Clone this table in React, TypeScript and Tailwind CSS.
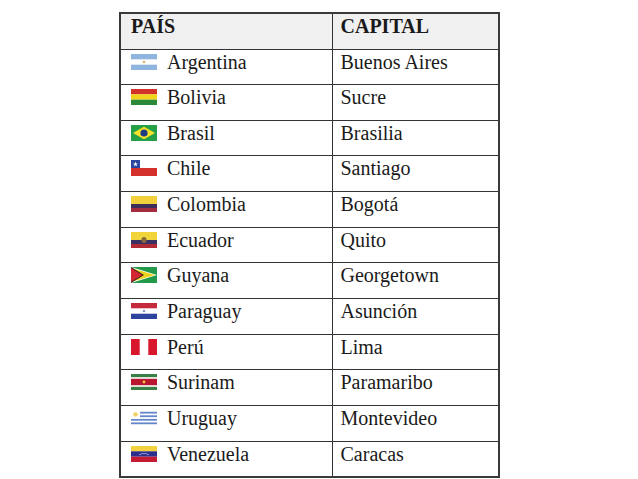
import type { ReactNode } from "react";

const Flag = ({ children }: { children: ReactNode }) => (
  <svg width="26" height="16" viewBox="0 0 26 16" className="shrink-0 mt-[3px]">
    {children}
  </svg>
);

const flags: Record<string, ReactNode> = {
  Argentina: (
    <>
      <rect width="26" height="16" fill="#fff" />
      <rect width="26" height="5.3" fill="#8fb4de" />
      <rect y="10.7" width="26" height="5.3" fill="#8fb4de" />
      <circle cx="13" cy="8" r="1.3" fill="#d9b75e" />
    </>
  ),
  Bolivia: (
    <>
      <rect width="26" height="5.4" fill="#d3322a" />
      <rect y="5.3" width="26" height="5.4" fill="#f1d51c" />
      <rect y="10.7" width="26" height="5.3" fill="#2b8a3a" />
    </>
  ),
  Brasil: (
    <>
      <rect width="26" height="16" fill="#26a046" />
      <polygon points="2,8 13,1.8 24,8 13,14.2" fill="#f5e12a" />
      <circle cx="13" cy="8" r="3.6" fill="#1f3c80" />
    </>
  ),
  Chile: (
    <>
      <rect width="26" height="8" fill="#fff" />
      <rect y="8" width="26" height="8" fill="#d3302c" />
      <rect width="9" height="8" fill="#2a46a0" />
      <polygon
        points="4.5,1.6 5.1,3.4 7,3.4 5.5,4.5 6.1,6.3 4.5,5.2 2.9,6.3 3.5,4.5 2,3.4 3.9,3.4"
        fill="#fff"
      />
    </>
  ),
  Colombia: (
    <>
      <rect width="26" height="8" fill="#f1d03c" />
      <rect y="8" width="26" height="4" fill="#3d2f5c" />
      <rect y="12" width="26" height="4" fill="#a02c3e" />
    </>
  ),
  Ecuador: (
    <>
      <rect width="26" height="8" fill="#f1d43a" />
      <rect y="8" width="26" height="4" fill="#3a3064" />
      <rect y="12" width="26" height="4" fill="#b02a36" />
      <ellipse cx="13" cy="8" rx="2.6" ry="3" fill="#8a6a3a" />
    </>
  ),
  Guyana: (
    <>
      <rect width="26" height="16" fill="#23994a" />
      <polygon points="0,0 26,8 0,16" fill="#fff" />
      <polygon points="0,1 24,8 0,15" fill="#f2d21e" />
      <polygon points="0,0 13,8 0,16" fill="#222" />
      <polygon points="0,1 11.5,8 0,15" fill="#d22630" />
    </>
  ),
  Paraguay: (
    <>
      <rect width="26" height="16" fill="#fff" />
      <rect width="26" height="5.3" fill="#c52a3c" />
      <rect y="10.7" width="26" height="5.3" fill="#2d44a0" />
      <circle cx="13" cy="8" r="1.3" fill="#8b9bc8" />
    </>
  ),
  Perú: (
    <>
      <rect width="26" height="16" fill="#fff" />
      <rect width="8.7" height="16" fill="#d7172b" />
      <rect x="17.3" width="8.7" height="16" fill="#d7172b" />
    </>
  ),
  Surinam: (
    <>
      <rect width="26" height="16" fill="#fff" />
      <rect width="26" height="3.2" fill="#3a7f46" />
      <rect y="4.8" width="26" height="6.4" fill="#b8172f" />
      <rect y="12.8" width="26" height="3.2" fill="#3a7f46" />
      <circle cx="13" cy="8" r="1.4" fill="#f2c93a" />
    </>
  ),
  Uruguay: (
    <>
      <rect width="26" height="16" fill="#fff" />
      <rect y="1.78" width="26" height="1.78" fill="#6286cc" />
      <rect y="5.33" width="26" height="1.78" fill="#6286cc" />
      <rect y="8.89" width="26" height="1.78" fill="#6286cc" />
      <rect y="12.44" width="26" height="1.78" fill="#6286cc" />
      <rect width="9" height="8.9" fill="#fff" />
      <circle cx="4.5" cy="4.4" r="2.2" fill="#f0cf60" />
    </>
  ),
  Venezuela: (
    <>
      <rect width="26" height="5.4" fill="#f1d23e" />
      <rect y="5.3" width="26" height="5.4" fill="#2b2f8c" />
      <rect y="10.7" width="26" height="5.3" fill="#c41a34" />
      <circle cx="9" cy="8.6" r="0.6" fill="#fff" />
      <circle cx="11" cy="7.6" r="0.6" fill="#fff" />
      <circle cx="13" cy="7.3" r="0.6" fill="#fff" />
      <circle cx="15" cy="7.6" r="0.6" fill="#fff" />
      <circle cx="17" cy="8.6" r="0.6" fill="#fff" />
    </>
  ),
};

const rows = [
  ["Argentina", "Buenos Aires"],
  ["Bolivia", "Sucre"],
  ["Brasil", "Brasilia"],
  ["Chile", "Santiago"],
  ["Colombia", "Bogotá"],
  ["Ecuador", "Quito"],
  ["Guyana", "Georgetown"],
  ["Paraguay", "Asunción"],
  ["Perú", "Lima"],
  ["Surinam", "Paramaribo"],
  ["Uruguay", "Montevideo"],
  ["Venezuela", "Caracas"],
];

export default function App() {
  return (
    <div className="w-[638px] h-[479px] bg-white pt-[12px] pl-[119px] [font-family:'Liberation_Serif',serif] text-[20px] leading-[23px] text-[#1a1a1a]">
      <table className="border-collapse border-2 border-[#3a3a3a] table-fixed w-[379px]">
        <colgroup>
          <col className="w-[212px]" />
          <col className="w-[167px]" />
        </colgroup>
        <thead>
          <tr className="h-[36px] bg-[#f0f0f0]">
            <th className="border border-[#333] text-left align-top font-bold pl-[10px] pt-px">PAÍS</th>
            <th className="border border-[#333] text-left align-top font-bold pl-[8px] pt-px">CAPITAL</th>
          </tr>
        </thead>
        <tbody>
          {rows.map(([country, capital]) => (
            <tr key={country} className="h-[35.67px]">
              <td className="border border-[#333] align-top pl-[10px] pt-px">
                <div className="flex gap-[10px]">
                  <Flag>{flags[country]}</Flag>
                  <span>{country}</span>
                </div>
              </td>
              <td className="border border-[#333] align-top pl-[8px] pt-px">{capital}</td>
            </tr>
          ))}
        </tbody>
      </table>
    </div>
  );
}
